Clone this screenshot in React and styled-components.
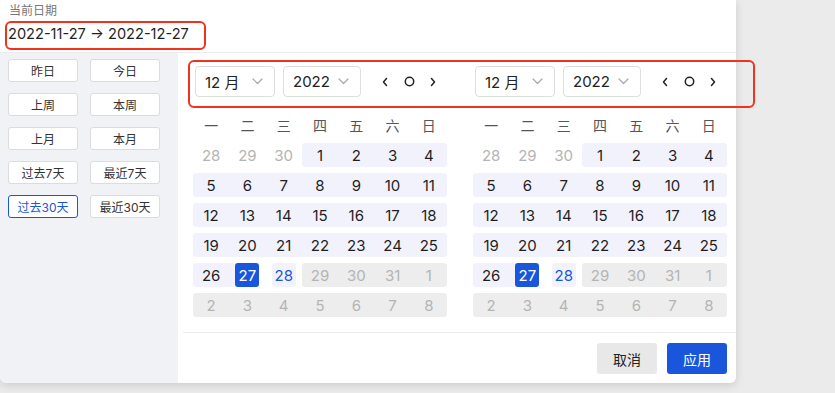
import React from "react"
import styled, { createGlobalStyle } from "styled-components"

const GlobalStyle = createGlobalStyle`
    html, body {
        margin: 0;
        padding: 0;
        background: #ebebeb;
        font-family: "Inter", "Noto Sans CJK SC", sans-serif;
    }
`

const presets = [
    ["昨日", "今日"],
    ["上周", "本周"],
    ["上月", "本月"],
    ["过去7天", "最近7天"],
    ["过去30天", "最近30天"],
]

const weekdays = ["一", "二", "三", "四", "五", "六", "日"]

// fill: range | off | lead ; mark: selected | today
const weeks = [
    [
        { d: 28, muted: true },
        { d: 29, muted: true },
        { d: 30, muted: true },
        { d: 1, fill: "range", start: true },
        { d: 2, fill: "range" },
        { d: 3, fill: "range" },
        { d: 4, fill: "range", end: true },
    ],
    [5, 6, 7, 8, 9, 10, 11].map((d, i) => ({ d, fill: "range", start: i === 0, end: i === 6 })),
    [12, 13, 14, 15, 16, 17, 18].map((d, i) => ({ d, fill: "range", start: i === 0, end: i === 6 })),
    [19, 20, 21, 22, 23, 24, 25].map((d, i) => ({ d, fill: "range", start: i === 0, end: i === 6 })),
    [
        { d: 26, fill: "range", start: true },
        { d: 27, fill: "lead", mark: "selected" },
        { d: 28, mark: "today" },
        { d: 29, fill: "off", muted: true, start: true },
        { d: 30, fill: "off", muted: true },
        { d: 31, fill: "off", muted: true },
        { d: 1, fill: "off", muted: true, end: true },
    ],
    [2, 3, 4, 5, 6, 7, 8].map((d, i) => ({ d, fill: "off", muted: true, start: i === 0, end: i === 6 })),
]

function Chevron() {
    return (
        <svg width="11" height="7" viewBox="0 0 11 7" fill="none">
            <path d="M1 1l4.5 4.5L10 1" stroke="#a8a8a8" strokeWidth="1.2" strokeLinecap="round" strokeLinejoin="round" />
        </svg>
    )
}

function Calendar() {
    return (
        <CalendarBox>
            <CalHeader>
                <Select width={80}>
                    <span>12 月</span>
                    <Chevron />
                </Select>
                <Select width={78}>
                    <span>2022</span>
                    <Chevron />
                </Select>
                <Nav>
                    <svg width="8" height="10" viewBox="0 0 8 10" fill="none">
                        <path d="M5.5 1.5L2.5 5l3 3.5" stroke="#222" strokeWidth="1.5" strokeLinecap="round" strokeLinejoin="round" />
                    </svg>
                    <svg width="11" height="11" viewBox="0 0 11 11" fill="none">
                        <circle cx="5.5" cy="5.5" r="4.2" stroke="#222" strokeWidth="1.5" />
                    </svg>
                    <svg width="8" height="10" viewBox="0 0 8 10" fill="none">
                        <path d="M2.5 1.5L5.5 5l-3 3.5" stroke="#222" strokeWidth="1.5" strokeLinecap="round" strokeLinejoin="round" />
                    </svg>
                </Nav>
            </CalHeader>
            <WeekRow>
                {weekdays.map((w) => (
                    <Weekday key={w}>{w}</Weekday>
                ))}
            </WeekRow>
            {weeks.map((week, wi) => (
                <WeekRow key={wi}>
                    {week.map((c, ci) => (
                        <Day key={ci} fill={c.fill} start={c.start} end={c.end} muted={c.muted}>
                            {c.mark ? <Mark kind={c.mark}>{c.d}</Mark> : c.d}
                        </Day>
                    ))}
                </WeekRow>
            ))}
        </CalendarBox>
    )
}

export default function App() {
    return (
        <Page>
            <GlobalStyle />
            <Panel>
                <Header>
                    <Label>当前日期</Label>
                    <Current>2022-11-27 → 2022-12-27</Current>
                </Header>
                <Body>
                    <Sidebar>
                        {presets.flat().map((p) => (
                            <Preset key={p} active={p === "过去30天"}>
                                {p}
                            </Preset>
                        ))}
                    </Sidebar>
                    <Main>
                        <Calendars>
                            <Calendar />
                            <Calendar />
                        </Calendars>
                        <Footer>
                            <Action>取消</Action>
                            <Action primary>应用</Action>
                        </Footer>
                    </Main>
                </Body>
            </Panel>
            <Highlight style={{ left: 5, top: 21, width: 201, height: 29 }} />
            <Highlight style={{ left: 188, top: 60, width: 567, height: 48 }} />
        </Page>
    )
}

const Page = styled.div`
    position: relative;
    width: 835px;
    height: 393px;
    overflow: hidden;
`

const Panel = styled.div`
    width: 736px;
    height: 383px;
    background: #fff;
    border-radius: 0 0 6px 6px;
    box-shadow: 0 2px 10px rgba(0, 0, 0, 0.14);
    display: flex;
    flex-direction: column;
    overflow: hidden;
`

const Header = styled.div`
    height: 49px;
    padding: 3px 8px 0;
    border-bottom: 1px solid #ececec;
    box-sizing: content-box;
    display: flex;
    flex-direction: column;
`

const Label = styled.div`
    font-size: 12px;
    line-height: 16px;
    color: #777;
    padding-left: 1px;
`

const Current = styled.div`
    margin-top: 6px;
    font-size: 14.6px;
    line-height: 18px;
    color: #1f1f1f;
`

const Body = styled.div`
    flex: 1;
    display: flex;
`

const Sidebar = styled.div`
    width: 178px;
    box-sizing: border-box;
    background: #f0f2f5;
    padding: 6px 8px;
    display: grid;
    grid-template-columns: 70px 70px;
    grid-auto-rows: 23px;
    column-gap: 12px;
    row-gap: 11px;
    align-content: start;
`

const Preset = styled.div`
    box-sizing: border-box;
    background: #fff;
    border: 1px solid ${(p) => (p.active ? "#1a56db" : "#dcdcdc")};
    border-radius: 3px;
    color: ${(p) => (p.active ? "#1a56db" : "#333")};
    font-size: 12px;
    display: flex;
    align-items: center;
    justify-content: center;
`

const Main = styled.div`
    flex: 1;
    display: flex;
    flex-direction: column;
`

const Calendars = styled.div`
    display: flex;
    gap: 26px;
    padding: 13px 0 0 15px;
    height: 279px;
    box-sizing: border-box;
`

const CalendarBox = styled.div`
    width: 254px;
    display: flex;
    flex-direction: column;
    gap: 6px;
`

const CalHeader = styled.div`
    display: flex;
    align-items: center;
    gap: 8px;
    padding-left: 2px;
    margin-bottom: 10px;
`

const Select = styled.div`
    width: ${(p) => p.width}px;
    height: 31px;
    box-sizing: border-box;
    border: 1px solid #dedede;
    border-radius: 4px;
    display: flex;
    align-items: center;
    justify-content: space-between;
    padding: 0 11px 0 9px;
    font-size: 15px;
    color: #222;
`

const Nav = styled.div`
    display: flex;
    align-items: center;
    gap: 14.5px;
    margin-left: 12px;
`

const WeekRow = styled.div`
    display: grid;
    grid-template-columns: repeat(7, 1fr);
    height: 24px;
`

const Weekday = styled.div`
    display: flex;
    align-items: center;
    justify-content: center;
    font-size: 14px;
    color: #555;
`

const fills = {
    range: "#f2f2fc",
    off: "#ededed",
    lead: "linear-gradient(to right, #f2f2fc 8px, transparent 8px)",
}

const Day = styled.div`
    display: flex;
    align-items: center;
    justify-content: center;
    font-size: 15px;
    color: ${(p) => (p.muted ? "#b4b4b4" : "#1f1f1f")};
    background: ${(p) => fills[p.fill] || "transparent"};
    border-top-left-radius: ${(p) => (p.start ? "3px" : "0")};
    border-bottom-left-radius: ${(p) => (p.start ? "3px" : "0")};
    border-top-right-radius: ${(p) => (p.end ? "3px" : "0")};
    border-bottom-right-radius: ${(p) => (p.end ? "3px" : "0")};
`

const Mark = styled.div`
    width: 24px;
    height: 24px;
    border-radius: 3px;
    display: flex;
    align-items: center;
    justify-content: center;
    background: ${(p) => (p.kind === "selected" ? "#1a56db" : "#f2f2fc")};
    color: ${(p) => (p.kind === "selected" ? "#fff" : "#1a56db")};
`

const Footer = styled.div`
    flex: 1;
    margin-left: 5px;
    border-top: 1px solid #ececec;
    display: flex;
    justify-content: flex-end;
    align-items: flex-start;
    gap: 10px;
    padding: 10px 9px 0 0;
`

const Action = styled.div`
    width: 60px;
    height: 31px;
    border-radius: 3px;
    display: flex;
    align-items: center;
    justify-content: center;
    font-size: 14px;
    background: ${(p) => (p.primary ? "#1a56db" : "#e8e8e8")};
    color: ${(p) => (p.primary ? "#fff" : "#222")};
`

const Highlight = styled.div`
    position: absolute;
    box-sizing: border-box;
    border: 2px solid #f2321f;
    border-radius: 6px;
    pointer-events: none;
`
